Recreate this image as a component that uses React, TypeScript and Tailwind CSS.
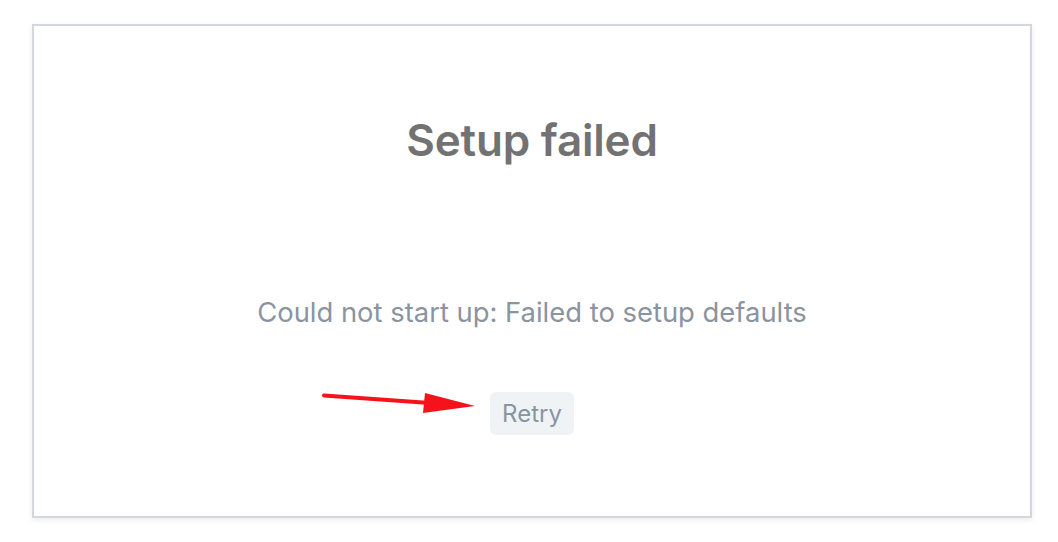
import React from 'react';

// Setup failure screen: a bordered card with a title, a message and a retry button.
// The red arrow is an annotation drawn over the page.

export default function App() {
  return (
    <div
      className="relative w-full h-[542px] bg-white pt-[24px] pl-[32px]"
      style={{ fontFamily: 'Inter, "Noto Sans", sans-serif' }}
    >
      <div className="w-[1000px] h-[494px] border-2 border-[#d3d8de] bg-white shadow-[0_2px_6px_rgba(0,0,0,0.08)] flex flex-col items-center pt-[88px]">
        <h1 className="text-[44px] leading-[52px] font-semibold text-[#727272] tracking-[-0.2px]">
          Setup failed
        </h1>
        <p className="mt-[130px] text-[27.4px] leading-[32px] text-[#8a94a1]">
          Could not start up: Failed to setup defaults
        </p>
        <button className="mt-[64px] h-[43px] px-[12px] rounded-[6px] bg-[#f0f3f6] text-[24px] leading-[32px] text-[#8a94a1]">
          Retry
        </button>
      </div>

      {/* annotation arrow */}
      <svg
        className="absolute left-0 top-0 pointer-events-none"
        width="1058"
        height="542"
        viewBox="0 0 1058 542"
      >
        <line x1="324" y1="395.5" x2="430" y2="403" stroke="#f5121b" strokeWidth="4" strokeLinecap="round" />
        <polygon points="425,393 423,413 475,406" fill="#f5121b" />
      </svg>
    </div>
  );
}
